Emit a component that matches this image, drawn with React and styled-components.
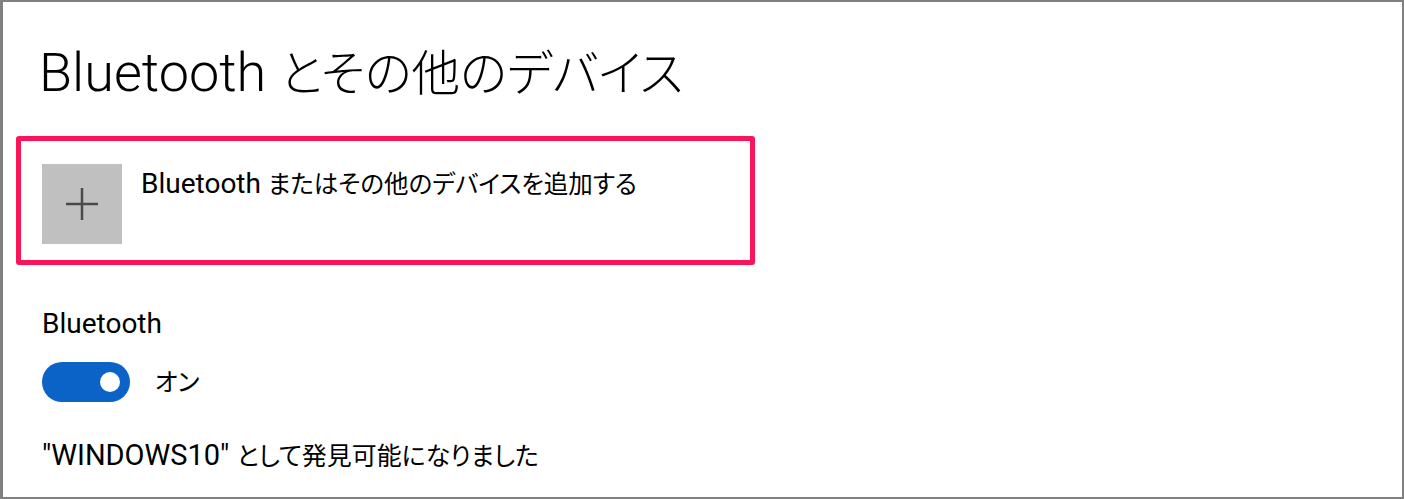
import React from "react";
import styled, { createGlobalStyle } from "styled-components";

const GlobalStyle = createGlobalStyle`
  html, body {
    margin: 0;
    padding: 0;
    background: #fff;
  }
  * {
    box-sizing: border-box;
  }
`;

const Frame = styled.div`
  width: 1404px;
  height: 499px;
  border: 2px solid #808080;
  border-left-width: 3px;
  background: #fff;
  padding: 39px 0 0 39px;
  font-family: Roboto, "Noto Sans CJK JP", sans-serif;
  font-feature-settings: "palt";
  color: #000;
  overflow: hidden;
`;

// Japanese runs sit a little smaller than the latin ones, like Yu Gothic UI
const Jp = styled.span`
  font-family: "Noto Sans CJK JP", sans-serif;
  font-size: ${(p) => p.$scale || 0.875}em;
  line-height: 1;
`;

const Title = styled.h1`
  margin: 0 0 0 -3px;
  font-size: 54px;
  font-weight: 300;
  line-height: 64px;
  white-space: nowrap;
`;

const AddBox = styled.div`
  width: 739px;
  margin: 31px 0 0 -26px;
  border: 5px solid #fb1459;
  border-radius: 3px;
  padding: 23px 0 16px 21px;
  display: flex;
  align-items: flex-start;
  gap: 19px;
`;

const PlusTile = styled.div`
  width: 80px;
  height: 80px;
  background: #c0c0c0;
  display: flex;
  align-items: center;
  justify-content: center;
  flex-shrink: 0;
`;

const Text = styled.div`
  font-size: ${(p) => p.$size || 28}px;
  line-height: 36px;
  margin-top: ${(p) => p.$top || 0}px;
  color: #000;
  white-space: nowrap;
`;

const ToggleRow = styled.div`
  display: flex;
  align-items: center;
  gap: 25px;
  margin-top: 20px;
`;

const Switch = styled.div`
  width: 88px;
  height: 40px;
  border-radius: 20px;
  background: #0b63c8;
  display: flex;
  align-items: center;
  justify-content: ${(p) => (p.$on ? "flex-end" : "flex-start")};
  padding: 0 10px;
`;

const Knob = styled.span`
  width: 20px;
  height: 20px;
  border-radius: 50%;
  background: #fff;
`;

const Plus = () => (
  <svg width="32" height="32" viewBox="0 0 32 32">
    <path d="M16 0v32M0 16h32" stroke="#4a4a4a" strokeWidth="2.5" fill="none" />
  </svg>
);

export default function App() {
  return (
    <>
      <GlobalStyle />
      <Frame>
        <Title>
          Bluetooth <Jp $scale={0.9}>とその他のデバイス</Jp>
        </Title>
        <AddBox>
          <PlusTile>
            <Plus />
          </PlusTile>
          <Text $top={2}>
            Bluetooth <Jp>またはその他のデバイスを追加する</Jp>
          </Text>
        </AddBox>
        <Text $top={41}>Bluetooth</Text>
        <ToggleRow>
          <Switch $on>
            <Knob />
          </Switch>
          <Text>
            <Jp>オン</Jp>
          </Text>
        </ToggleRow>
        <Text $top={35} $size={29}>
          "WINDOWS10" <Jp $scale={0.86}>として発見可能になりました</Jp>
        </Text>
      </Frame>
    </>
  );
}
